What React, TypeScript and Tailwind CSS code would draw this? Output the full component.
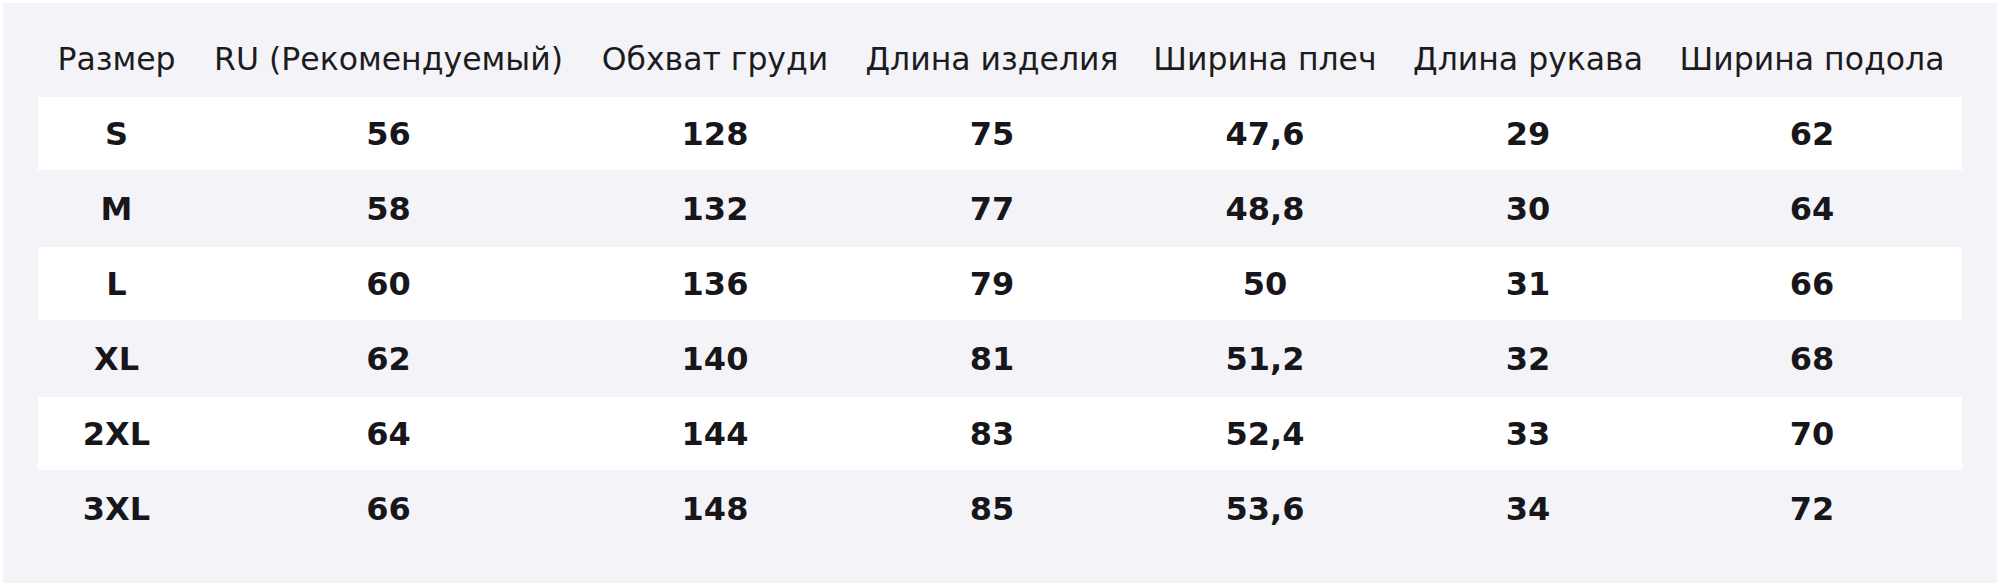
const headers = [
  "Размер",
  "RU (Рекомендуемый)",
  "Обхват груди",
  "Длина изделия",
  "Ширина плеч",
  "Длина рукава",
  "Ширина подола",
];

const rows = [
  ["S", "56", "128", "75", "47,6", "29", "62"],
  ["M", "58", "132", "77", "48,8", "30", "64"],
  ["L", "60", "136", "79", "50", "31", "66"],
  ["XL", "62", "140", "81", "51,2", "32", "68"],
  ["2XL", "64", "144", "83", "52,4", "33", "70"],
  ["3XL", "66", "148", "85", "53,6", "34", "72"],
];

const gridCols = "grid grid-cols-[157px_387px_266px_288px_258px_268px_300px]";

export default function App() {
  return (
    <div className="h-[585px] w-[2000px] bg-white p-[3px] font-['DejaVu_Sans',sans-serif]">
      <div className="h-[580px] bg-[#f4f4f8] px-[35px] pt-[17px] pb-[36px]">
        {/* header */}
        <div className={`${gridCols} h-[77px] items-center pt-[2px] text-[31.5px] text-[#1c1c20]`}>
          {headers.map((h) => (
            <div key={h} className="text-center whitespace-nowrap">
              {h}
            </div>
          ))}
        </div>

        {/* size rows, striped */}
        {rows.map((row, i) => (
          <div
            key={row[0]}
            className={`${gridCols} items-center pt-[1px] text-[32px] font-bold text-[#17171b] ${
              i % 2 === 0 ? "h-[73px] bg-white" : "h-[77px]"
            }`}
          >
            {row.map((v, j) => (
              <div key={j} className="text-center">
                {v}
              </div>
            ))}
          </div>
        ))}
      </div>
    </div>
  );
}
